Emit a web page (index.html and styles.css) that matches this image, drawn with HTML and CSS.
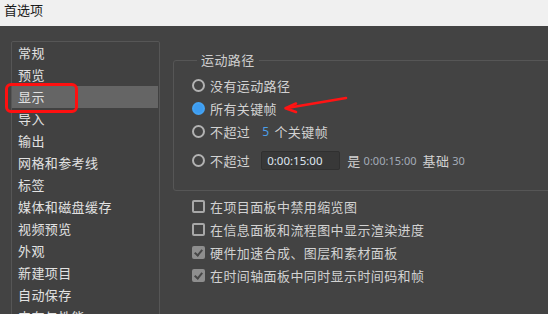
FILE: index.html
```html
<!DOCTYPE html>
<html>
<head>
    <meta charset="utf-8">
    <title>首选项</title>
    <link rel="stylesheet" href="styles.css">
</head>
<body>
    <div class="titlebar">首选项</div>
    <div class="main">
        <ul class="navlist">
            <li>常规</li>
            <li>预览</li>
            <li class="active">显示<span class="mark"></span></li>
            <li>导入</li>
            <li>输出</li>
            <li>网格和参考线</li>
            <li>标签</li>
            <li>媒体和磁盘缓存</li>
            <li>视频预览</li>
            <li>外观</li>
            <li>新建项目</li>
            <li>自动保存</li>
            <li>内存与性能</li>
        </ul>

        <div class="content">
            <fieldset class="group">
                <legend>运动路径</legend>
                <div class="row"><span class="radio"></span>没有运动路径</div>
                <div class="row"><span class="radio on"></span>所有关键帧</div>
                <div class="row"><span class="radio"></span>不超过<span class="num">5</span>个关键帧</div>
                <div class="row tall">
                    <span class="radio"></span>不超过
                    <span class="field">0:00:15:00</span>
                    <span class="is">是</span>
                    <span class="small">0:00:15:00</span>
                    <span class="base">基础</span>
                    <span class="small">30</span>
                </div>
            </fieldset>

            <div class="checks">
                <div class="row"><span class="box"></span>在项目面板中禁用缩览图</div>
                <div class="row"><span class="box"></span>在信息面板和流程图中显示渲染进度</div>
                <div class="row"><span class="box on"></span>硬件加速合成、图层和素材面板</div>
                <div class="row"><span class="box on"></span>在时间轴面板中同时显示时间码和帧</div>
            </div>
        </div>

        <!-- annotation arrow -->
        <svg class="arrow" width="70" height="26" viewBox="0 0 70 26">
            <path d="M66 6 L7 16" stroke="#ff1414" stroke-width="2.6" stroke-linecap="round" fill="none"/>
            <path d="M16 11.5 L5.5 16.2 L16 20" stroke="#ff1414" stroke-width="2.6" stroke-linecap="round" stroke-linejoin="round" fill="none"/>
        </svg>
    </div>
</body>
</html>
```

FILE: styles.css
```css
* {
    box-sizing: border-box;
}

body {
    margin: 0;
    width: 548px;
    height: 314px;
    overflow: hidden;
    background: #434343;
    font-family: "Noto Sans CJK SC", sans-serif;
    font-size: 13px;
    color: #d6d6d6;
}

.titlebar {
    height: 26px;
    line-height: 20px;
    padding-left: 4px;
    background: #f0f0f0;
    color: #1a1a1a;
    font-size: 13px;
}

.main {
    position: relative;
    display: flex;
    align-items: flex-start;
    padding-left: 11px;
    height: 288px;
    overflow: hidden;
}

.navlist {
    flex: none;
    list-style: none;
    margin: 15px 0 0 0;
    padding: 0;
    width: 149px;
    height: 300px;
    border: 1px solid #565656;
    border-radius: 2px;
    background: #414141;
}

.navlist li {
    position: relative;
    height: 22px;
    line-height: 22px;
    padding-left: 6px;
    color: #e2e2e2;
    letter-spacing: 0.4px;
    margin-right: 1px;
}

.navlist li.active {
    background: #656565;
}

.mark {
    position: absolute;
    left: -7px;
    top: -3px;
    width: 73px;
    height: 30px;
    border: 3px solid #ff1010;
    border-radius: 6px;
}

.content {
    flex: none;
    margin-left: 13px;
    margin-top: 26px;
}

.group {
    margin: 0;
    width: 400px;
    padding: 6px 0 18px 18px;
    border: 1px solid #565656;
    border-radius: 3px;
}

.group legend {
    margin-left: 5px;
    padding: 0 4px;
    line-height: 16px;
    color: #cfcfcf;
    letter-spacing: 0.4px;
}

.row {
    display: flex;
    align-items: center;
    height: 23px;
    color: #d2d2d2;
    letter-spacing: 0.4px;
    white-space: nowrap;
}

.row.tall {
    margin-top: 6px;
}

.radio {
    width: 13px;
    height: 13px;
    margin-right: 5px;
    border: 2px solid #b2b2b2;
    border-radius: 50%;
}

.radio.on {
    border-color: #44a3f3;
    background: #3d9cf0;
}

.num {
    margin: 0 5px 0 12px;
    color: #4b9fe9;
    font-family: "Noto Sans", sans-serif;
    font-size: 12px;
}

.field {
    margin-left: 11px;
    width: 79px;
    height: 19px;
    line-height: 17px;
    padding-left: 5px;
    background: #383838;
    border: 1px solid #303030;
    border-radius: 2px;
    color: #dfe6f0;
    font-family: "Noto Sans", sans-serif;
    font-size: 11.5px;
    letter-spacing: 0;
}

.is {
    margin-left: 7px;
}

.small {
    margin-left: 3px;
    color: #a4acb8;
    font-family: "Noto Sans", sans-serif;
    font-size: 11px;
    letter-spacing: 0;
}

.base {
    margin-left: 6px;
}

.checks {
    margin-top: 4px;
    padding-left: 19px;
}

.box {
    width: 13px;
    height: 13px;
    margin-right: 5px;
    border: 2px solid #a8a8a8;
    border-radius: 2px;
    position: relative;
}

.box.on {
    background: #8e8e8e;
    border-color: #8e8e8e;
}

.box.on::after {
    content: '';
    position: absolute;
    left: 2px;
    top: 0px;
    width: 3px;
    height: 6px;
    border: solid #474747;
    border-width: 0 2px 2px 0;
    transform: rotate(40deg);
}

.arrow {
    position: absolute;
    left: 280px;
    top: 66px;
}
```
